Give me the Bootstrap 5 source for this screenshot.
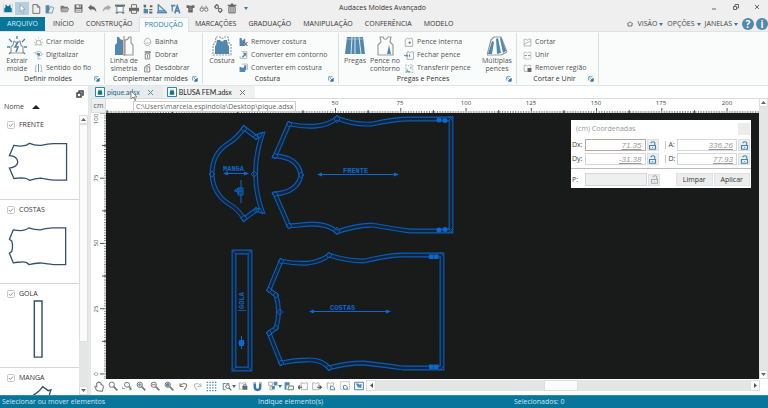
<!DOCTYPE html>
<html lang="pt-BR" class="h-100">
<head>
<meta charset="utf-8">
<meta name="viewport" content="width=device-width, initial-scale=1">
<title>Audaces Moldes Avançado</title>
<link href="https://cdn.jsdelivr.net/npm/bootstrap@5.3.0/dist/css/bootstrap.min.css" rel="stylesheet">
<style>
:root{--teal:#08759b;--ink:#444;--steel:#5088ae;--pen:#0b68d0;--dark:#181b1a}
body{font-family:"Open Sans","Noto Sans",sans-serif;font-size:7px;line-height:8px;color:var(--ink);background:#fff}
svg{display:block;flex:none}
button,input{font:inherit;color:inherit}
.plain{background:none;border:0;padding:0;color:inherit;display:flex;align-items:center;justify-content:center}
.ln{fill:none;stroke:#666;stroke-width:1.4;stroke-linejoin:round}
.lt{fill:none;stroke:#999;stroke-width:1.2;stroke-linejoin:round}
.bl{fill:none;stroke:var(--steel);stroke-width:1.6;stroke-linejoin:round}
.fb{fill:var(--steel)}.fk{fill:#666}
.topbar{background:#efefef;height:17px}
.side-part{flex:1 0 0}
.quick{padding-left:1px;padding-top:2px}
.quick button{width:14px;height:13px}
.quick .chosen{background:#b5cfdf}
.app-title{color:#333}
.tabsrow{background:#efefef;height:15px;border-bottom:1px solid #dfe3e4}
.tabsrow a{padding:0 6px;height:14px;display:flex;align-items:center;color:#333;text-decoration:none}
.tabsrow a.file{background:var(--teal);color:#dceef5;width:45px;padding:0;margin-right:2px;justify-content:center}
.tabsrow a.on{background:#fafcfc;color:#277fa5;border:1px solid #dce1e3;border-bottom:0;height:15px;padding:0 5px}
.menus{gap:4px}
.menus button,.rounds{gap:2px}
.tri{width:0;height:0;border:2px solid transparent;border-top:3px solid #39799b;border-bottom:0}
.ribbon{background:#fafcfc;height:54px;border-bottom:1px solid #e2e5e5}
.rgroup{border-right:1px solid #dcdfdf;margin:1px 0;padding-left:4px}
.big{width:30px;padding-top:2px;flex-direction:column;justify-content:flex-start;color:#555;white-space:nowrap}
.small-col{padding:2px 0 0 2px}
.small-col button{height:13px;gap:3px;justify-content:flex-start;color:#555;white-space:nowrap}
.gname{height:11px;color:#333}
.w1{width:105px;padding-left:2px}.w2{width:98px}.w3{width:136px}.w4{width:178px;padding-left:1px}.w5{width:82px}
.side{width:88px}
.side-head{height:29px}
.piece{height:84px;padding:6px 4px 0 3px}
.piece+.piece{border-top:1px solid #d5d8d8}
.piece label{color:#333}
.piece input{width:8px;height:8px;border-radius:0;margin:0;border:1px solid #ccc;background-color:#fff}
.piece .form-check-input:checked{background-color:#fff;border-color:#c8c8c8;background-image:none}
.tickbox{width:8px;height:8px;display:grid}
.tickbox>*{grid-area:1/1}
.tickbox svg{pointer-events:none;z-index:1}
.thumbline{fill:none;stroke:#34516d;stroke-width:4}
.thumbline.thin{stroke-width:3}
.sb{background:#e4e6e5}
.sb button{background:#fcfcfc;border:1px solid #dedede;width:9px;height:9px}
.sb .grip{background:#fbfbfb;border:1px solid #dedede}
.split{width:3px;background:#e6e8e8}
.doctabs{height:12px;font-family:Lato,sans-serif}
.doctab{background:#f0f2f2;padding:0 4px;gap:2px;color:#222}
.doctab.sel{background:#e7ebed;color:#27638a}
.doctab a{color:inherit;text-decoration:none}
.doctab .shut{padding:0 6px}
.corner{width:15px;background:#eef0f0;border:1px solid #dcdfdf;color:#555}
.hrule{height:15px;border-top:1px solid #d8dbdb;background:#fff}
.vrule{width:15px;background:#fff}
.rt{font-size:6px;fill:#444}
.board{background:var(--dark)}
.pat .a{fill:none;stroke:#0c5cb8;stroke-width:4.8}
.pat .b{fill:none;stroke:#11253a;stroke-width:2.6}
.pat .n{fill:none;stroke:#0c5cb8;stroke-width:.9}
.pat .s{fill:var(--pen);stroke:none}
.pat .l{fill:none;stroke:var(--pen);stroke-width:1}
.pat text{font:bold 7px "Liberation Mono",monospace;fill:var(--pen)}
.coords{top:7px;right:8px;width:180px;background:#fff}
.coords .head{height:18px;padding:0 1px 0 5px;color:#999}
.coords .head button{width:12px;height:12px;background:#ececec}
.cgrid{display:grid;grid-template-columns:12px minmax(0,1fr) 12px 16px minmax(0,1fr) 12px;gap:2px 1px;padding:1px 1px 3px}
.cgrid input,.prow input{width:100%;min-width:0;height:12px;border:1px solid #d4d8da;border-radius:0;padding:0 3px;text-align:right;font:italic 8px "Liberation Sans",sans-serif;text-decoration:underline;color:#999;background:#fff}
.cgrid #dx{border-color:#b8a99c}
.lock{height:12px;background:#eceeef;border:1px solid #dde0e0}
.mid{border-left:1px solid #ccc;margin-left:5px;padding-left:3px}
.prow{display:grid;grid-template-columns:12px 62px 12px 14px 1fr 1fr;gap:1px;border-top:1px solid #bbb;padding:4px 1px 2px}
.prow input{background:#efefef;height:13px}
.prow .cmd{background:#ededed;border:1px solid #e2e2e2;height:13px;color:#333}
.prow .first{grid-column:5}
.tip{top:3px;left:42px;background:#fff;border:1px solid #ccc;height:11px;padding:0 2px;white-space:nowrap;color:#666;z-index:3;display:flex;align-items:center}
.pointer{left:39px;top:4px;z-index:4}
.viewbar{height:16px;padding-left:1px}
.viewbar .tools button{width:14px;height:14px}
.viewbar .sb{height:11px;margin-top:1px}
.viewbar .sb button{width:10px;height:11px}
.status{background:var(--teal);color:#cfe6ef;height:13px;border-top:1px solid #3189a9}
.status>div{padding-left:2px}
.rnd{width:12px;height:12px;border-radius:50%;background:var(--steel);color:#fff;font-weight:700;font-size:10px}
</style>
<script src="https://cdn.jsdelivr.net/npm/bootstrap@5.3.0/dist/js/bootstrap.bundle.min.js"></script>
</head>
<body class="d-flex flex-column min-vh-100 overflow-hidden">
<svg width="0" height="0" class="position-absolute" aria-hidden="true">
<defs>
<path id="p-frente" d="M289 124Q304 127 316 126Q329 125 337 118Q353 125 372 124Q395 119 410 119H451V231H410Q395 229 372 225Q353 226 337 232Q329 224 311 224L289 226L275 194Q298 192 301 175Q298 157 275 156Z"/>
<path id="p-costas" d="M281 261Q296 264 309 263Q322 261 329 255Q346 261 364 261Q390 255 403 255H442V368H403Q390 366 364 363Q346 363 329 368Q322 359 306 360Q294 360 281 363L269 333L276 328Q281 312 276 295L269 290Z"/>
<path id="p-gola" d="M234 252H250V369H234Z"/>
<path id="p-manga" d="M244 128Q237 138 229 143Q212 153 212 174Q213 194 229 204Q238 209 244 219L256 210L262 211Q249 174 262 135L256 137Z"/>
<symbol id="shirt" viewBox="0 0 16 16"><path d="M4 1h2v2q2 2 4 0V1h2v4l2 2v8H2V7l2-2z"/></symbol>
<symbol id="i-logo" viewBox="0 0 16 16"><path d="M1 0v16M15 0v16" stroke="#b7ccd6"/><path fill="#08759b" d="M4 2h2v2h4V2h2v4l2 2v6H2V8l2-2z"/></symbol>
<symbol id="i-arrow" viewBox="0 0 16 16"><path d="M5 1l8 8H9l2 5-2 1-2-5-2 2z" fill="#fff" stroke="#6f93aa"/></symbol>
<symbol id="i-page" viewBox="0 0 16 16"><path class="ln" fill="#fff" d="M3 1h7l4 4v10H3zM10 1v4h4"/></symbol>
<symbol id="i-books" viewBox="0 0 16 16"><path class="fb" d="M1 2h6v13H1z"/><path d="M9 4l5 2-3 9-6-2z" fill="#eee" stroke="#6b8da5" stroke-width="1.3"/></symbol>
<symbol id="i-open" viewBox="0 0 16 16"><path d="M1 13V3h5l2 2h6v2H5z" fill="#777"/><path d="M5 8h11l-3 6H2z" fill="#b5ae9d" stroke="#777"/></symbol>
<symbol id="i-save" viewBox="0 0 16 16"><path class="fk" d="M1 1h14v14H1zM4 2v4h8V2zM3 9v5h10V9z" fill-rule="evenodd"/><path class="fk" d="M4 10h8v1H4zM4 12h8v1H4zM9 2h2v3H9z"/></symbol>
<symbol id="i-undo" viewBox="0 0 16 16"><path d="M0 6l6-5v3q8 0 9 10-3-5-9-5v3z" fill="#666"/></symbol>
<symbol id="i-redo" viewBox="0 0 16 16"><path d="M16 6l-6-5v3q-8 0-9 10 3-5 9-5v3z" fill="#aaa"/></symbol>
<symbol id="i-plot" viewBox="0 0 16 16"><path class="fk" d="M0 1h16v3H0z"/><path d="M3 4h10v9H3z" fill="#fff" stroke="#6387a0" stroke-width="1.6"/><path class="fk" d="M1 13h4v2H1zM11 13h4v2h-4z"/></symbol>
<symbol id="i-print" viewBox="0 0 16 16"><path class="ln" d="M4 6V1h8v5M4 10h8v5H4z"/><path class="fk" d="M0 6h16v6h-3v-2H3v2H0z"/></symbol>
<symbol id="i-points" viewBox="0 0 16 16"><path class="fb" d="M1 8h7v7H1z"/><path class="fk" d="M1 1h4v4H1zM11 2h4v3h-4zM10 8h5v2h-5zM10 12h5v3h-5z"/><path d="M3 5v3" stroke="#666"/></symbol>
<symbol id="i-set" viewBox="0 0 16 16"><path d="M2 1l11 10H2z" fill="#dce7ee" stroke="#4d86ac" stroke-width="2"/><path class="fb" d="M0 12h16v3H0z"/></symbol>
<symbol id="i-textA" viewBox="0 0 16 16"><path class="fb" d="M0 1h7v3H0zM1 4h2v8H1z"/><path d="M6 15L10 3l4 12M7 11h6" fill="none" stroke="#5088ae" stroke-width="2.600"/></symbol>
<symbol id="i-tee" viewBox="0 0 16 16"><path class="fk" d="M1 2h4q3 2 6 0h4v5h-3v8H4V7H1z"/><path d="M6 7h4M6 10h4" stroke="#bbb"/></symbol>
<symbol id="i-bino" viewBox="0 0 16 16"><g class="ln" stroke-width="2"><circle cx="4" cy="10" r="3"/><circle cx="12" cy="10" r="3"/><path d="M2 8l3-5M14 8l-3-5M6 7h4"/></g></symbol>
<symbol id="i-gears" viewBox="0 0 16 16"><g fill="none" stroke="#666" stroke-width="2"><circle cx="5" cy="5" r="3"/><circle cx="11" cy="11" r="3"/></g><path d="M5 0v2M0 5h2M8 8l1 1M15 11h1M11 14v2" stroke="#666" stroke-width="2"/></symbol>
<symbol id="i-trash" viewBox="0 0 16 16"><path class="fk" d="M1 2h5V0h4v2h5v2H1z"/><path d="M3 5h10v10H3z" fill="#ddd" stroke="#666" stroke-width="1.6"/><path d="M6 6v8M8 6v8M10 6v8" stroke="#666"/></symbol>
<symbol id="i-extract" viewBox="0 0 20 20"><path d="M10 0v3M2 3l3 3M18 3l-3 3M0 11h3M17 11h3M2 18l2-2M18 18l-2-2" stroke="#4d86ac" stroke-width="1.3"/><path class="lt" d="M7 5q3 3 6 0l1 4 2 2v6H4v-6l2-2z"/><path d="M11 6l-3 5h3l-2 5" fill="none" stroke="#4d86ac" stroke-width="1.600"/></symbol>
<symbol id="i-line" viewBox="0 0 20 20"><path class="fb" d="M3 1h2q1 3 4 3v15H1V9l2-2z"/><path class="lt" d="M11 4q3 0 4-3h2v6l2 2v10h-8z"/><path d="M10 0v20" stroke="#b86b4a"/></symbol>
<symbol id="i-costura" viewBox="0 0 20 20"><path class="lt" stroke-dasharray="2 1" d="M4 1h4q2 3 4 0h4l1 6 2 2v10H1V9l2-2z"/><path class="fb" d="M5 4h3q2 3 4 0h3l1 5 1 1v8H3v-8l1-1z"/></symbol>
<symbol id="i-pregas" viewBox="0 0 20 20"><path class="fb" d="M2 1h16l2 17H0z"/><path d="M7 1L6 18M10 1v17M14 1l2 17" stroke="#fff" stroke-width=".8"/><path d="M2 3h16" stroke="#cfdee8" stroke-width=".6"/></symbol>
<symbol id="i-pence" viewBox="0 0 20 20"><path class="lt" d="M5 1h3q2 5 5 0h3l-1 5 3 3v10H3V9l3-3z"/><path class="fb" d="M14 9l2 9h-4z"/></symbol>
<symbol id="i-multi" viewBox="0 0 20 20"><path class="lt" d="M7 1h7l6 15-6 3H0L4 4z"/><path class="fb" d="M5 5L1 18h4l2-12zM9 3l1 15 4-1L11 2zM14 1l5 14-3 2-3-14z"/></symbol>
<symbol id="s-star" viewBox="0 0 16 16"><path d="M8 0v3M1 2l3 3M15 2l-3 3M0 9h3M13 9h3M1 15l3-3M15 15l-3-3" stroke="#aaa"/><path class="lt" d="M5 5q3 2 6 0l2 8H3z"/></symbol>
<symbol id="s-digit" viewBox="0 0 16 16"><path class="lt" d="M1 4l9-3 5 6-5 3zM7 9v6h5"/><path class="fb" d="M5 4l6 1-1 5-4-2z"/></symbol>
<symbol id="s-fio" viewBox="0 0 16 16"><path class="lt" d="M5 2Q2 4 3 8l-1 6h3M11 2q3 2 2 6l1 6h-3"/><path d="M8 1v14" stroke="#4d86ac" stroke-width="1.5"/></symbol>
<symbol id="s-hem" viewBox="0 0 16 16"><path class="lt" d="M5 2q6-2 8 2l1 6-4 4H5L2 9zM4 10h7l3-3"/></symbol>
<symbol id="s-fold" viewBox="0 0 16 16"><path class="ln" d="M3 4h10M4 6h8v9H4zM3 2h10v2"/><path class="bl" d="M8 8v5"/></symbol>
<symbol id="s-unfold" viewBox="0 0 16 16"><path class="ln" d="M3 6h9v9H3zM5 4l7-3"/><path class="bl" d="M7 8v5M10 1l3 3"/></symbol>
<symbol id="s-rem" viewBox="0 0 16 16"><path class="fb" d="M1 1h4v4q3 1 4-3h2v8h-1v5H1z"/><path d="M9 8l6 7M15 8l-6 7" stroke="#777" stroke-width="2"/></symbol>
<symbol id="s-cont" viewBox="0 0 16 16"><path class="lt" d="M5 2h9v12H2v-4"/><path class="fb" d="M7 4h6v7l-2-2-4 4-2-2 4-4z"/></symbol>
<symbol id="s-cost" viewBox="0 0 16 16"><path class="lt" d="M5 1h10v10"/><path class="fb" d="M1 6h3l2 2 3-2V3h4v9h-2v3H1z"/></symbol>
<symbol id="s-pin" viewBox="0 0 16 16"><path class="lt" d="M2 15V5l2-3h2q2 3 4 0h3l1 5v8z"/><path class="bl" d="M9 7v4M7 9h4"/></symbol>
<symbol id="s-pclose" viewBox="0 0 16 16"><path class="lt" d="M5 15V3h3q2 3 4 0h3v12z"/><path class="bl" d="M0 9h6M4 7l2 2-2 2M9 7v4"/></symbol>
<symbol id="s-ptrans" viewBox="0 0 16 16"><path class="lt" stroke-dasharray="3 2" d="M3 15V3h3q2 3 4 0h4v12z"/><path class="bl" d="M5 10v4h5M11 6v3"/></symbol>
<symbol id="s-cut" viewBox="0 0 16 16"><path class="lt" d="M2 15V3h3q3 3 5 0h4v12zM2 12L14 6"/></symbol>
<symbol id="s-join" viewBox="0 0 16 16"><path class="lt" stroke-dasharray="3 1" d="M2 15V3h3q3 3 5 0h4v12z"/><path class="bl" d="M3 9h4M9 9h4"/></symbol>
<symbol id="s-region" viewBox="0 0 16 16"><path class="lt" d="M2 14V3h3q3 3 5 0h3v4M2 14h6"/><path class="fk" d="M8 8h7v7H8z"/></symbol>
<symbol id="i-launch" viewBox="0 0 8 8"><path d="M1 6V1h5" fill="none" stroke="#5f94b3" stroke-width="1.3"/><path d="M3 3l3 3M7 3v4H3z" fill="#2f7198" stroke="#2f7198"/></symbol>
<symbol id="v-hand" viewBox="0 0 16 16"><path class="ln" d="M4 14L1 8q1-2 3 1V3q1-1 2 0V1.500q1-1 2 0V3q1-2 2 0v2q2-1 2 1v1q2-1 2 1l-2 7z"/></symbol>
<symbol id="v-zoom" viewBox="0 0 16 16"><circle class="ln" cx="6" cy="6" r="4.200"/><path d="M9 9l6 6" stroke="#777" stroke-width="2.500"/></symbol>
<symbol id="v-zbox" viewBox="0 0 16 16"><path d="M5 12H1V9M14 8v6h-3" fill="none" stroke="#8a6a50"/><circle class="bl" cx="8" cy="6" r="4"/><path d="M11 9l4 5" stroke="#777" stroke-width="2"/></symbol>
<symbol id="v-plus" viewBox="0 0 16 16"><use href="#v-zoom"/><path d="M3 6h6M6 3v6" stroke="#4d86ac" stroke-width="1.500"/></symbol>
<symbol id="v-minus" viewBox="0 0 16 16"><use href="#v-zoom"/><path d="M3 6h6" stroke="#a55" stroke-width="1.500"/></symbol>
<symbol id="v-all" viewBox="0 0 16 16"><use href="#v-zoom"/><circle class="fb" cx="6" cy="6" r="3"/></symbol>
<symbol id="v-back" viewBox="0 0 16 16"><path d="M2 2v6h6M2 7q5-7 11-3 2 4-4 10" fill="none" stroke="#8a7365" stroke-width="1.800"/></symbol>
<symbol id="v-fwd" viewBox="0 0 16 16"><path d="M14 2v6H8M14 7Q9 0 3 4q-2 4 4 10" fill="none" stroke="#bbb" stroke-width="1.800"/></symbol>
<symbol id="v-grid" viewBox="0 0 16 16"><path d="M1 2h14M1 6h14M1 10h14M1 14h14" stroke="#4385b5" stroke-width="2" stroke-dasharray="2 2"/></symbol>
<symbol id="v-find" viewBox="0 0 16 16"><path class="bl" d="M2 14V4h3q2 2 3 0h3v2M2 14h4"/><circle class="ln" cx="9" cy="9" r="3"/><path d="M11 11l4 4" stroke="#666" stroke-width="2"/></symbol>
<symbol id="v-lockp" viewBox="0 0 16 16"><path class="lt" d="M2 13V3h3q2 2 4 0h3v4M2 13h4"/><path class="fk" d="M7 8h8v6H7z"/><path class="bl" d="M9 8V6h4v2"/></symbol>
<symbol id="v-magnet" viewBox="0 0 16 16"><path d="M4 2v6q0 5 4 5t4-5V2" fill="none" stroke="#3476a8" stroke-width="3.500"/><path d="M2 3h4M10 3h4" stroke="#bbb" stroke-width="2"/></symbol>
<symbol id="v-blocks" viewBox="0 0 16 16"><path class="lt" d="M1 2h6v5H1zM3 9h6v5H3z"/><path class="fb" d="M9 1h6v6H9zM6 8h5v5H6z"/></symbol>
<symbol id="v-mov" viewBox="0 0 16 16"><path class="fb" d="M1 2h8v5H4v7H1z"/><path class="ln" d="M8 8h7v6H6z"/></symbol>
<symbol id="v-left" viewBox="0 0 16 16"><path class="lt" d="M5 14V3h3q2 3 4 0h3v11z"/><path d="M0 10h7M3 7l-3 3 3 3" fill="none" stroke="#555" stroke-width="1.800"/></symbol>
<symbol id="v-right" viewBox="0 0 16 16"><path class="lt" d="M1 14V3h3q2 3 4 0h3v11z"/><path d="M8 10h7M12 7l3 3-3 3" fill="none" stroke="#555" stroke-width="1.800"/></symbol>
<symbol id="v-down" viewBox="0 0 16 16"><path class="lt" d="M2 13V3h3q2 3 4 0h3v4"/><path class="bl" d="M7 8q6-1 7 6H7z"/></symbol>
<symbol id="v-dash" viewBox="0 0 16 16"><path class="lt" stroke-dasharray="2 1" d="M1 1h14v13H1z"/><path class="bl" d="M5 8q6-4 7 5H6z"/></symbol>
<symbol id="v-img" viewBox="0 0 16 16"><path class="bl" d="M1 2h14v12H1z"/><path class="fb" d="M3 4h4l2 2 3-2v7l-6-1z"/></symbol>
<symbol id="i-lock" viewBox="0 0 12 12"><path d="M2 6h8v5H2z" fill="none" stroke="currentColor" stroke-width="1.500"/><path d="M4 3V2q3-2 5 0v4M6 8v1" fill="none" stroke="currentColor" stroke-width="1.400"/></symbol>
<pattern id="hticks" width="65.250" height="15" x="33.300" patternUnits="userSpaceOnUse"><path d="M.5 9v5M33.100 11v3" stroke="#555"/><path d="M0 13h66" stroke="#777" stroke-width="2" stroke-dasharray="1 1.610"/></pattern>
<pattern id="vticks" height="65.250" width="15" y="64.700" patternUnits="userSpaceOnUse"><path d="M9 .5h6M11 33.100h4" stroke="#555"/><path d="M14 0v66" stroke="#777" stroke-width="2" stroke-dasharray="1 1.610"/></pattern>
</defs>
</svg>

<header>
<div class="topbar d-flex align-items-start">
<div class="quick side-part d-flex">
<button class="plain" aria-label="Audaces"><svg width="10" height="11"><use href="#i-logo"/></svg></button>
<button class="plain chosen" aria-label="Selecionar"><svg width="10" height="10"><use href="#i-arrow"/></svg></button>
<button class="plain" aria-label="Novo"><svg width="10" height="10"><use href="#i-page"/></svg></button>
<button class="plain" aria-label="Biblioteca"><svg width="10" height="10"><use href="#i-books"/></svg></button>
<button class="plain" aria-label="Abrir"><svg width="9" height="9"><use href="#i-open"/></svg></button>
<button class="plain" aria-label="Salvar"><svg width="9" height="9"><use href="#i-save"/></svg></button>
<button class="plain" aria-label="Desfazer"><svg width="9" height="9"><use href="#i-undo"/></svg></button>
<button class="plain" aria-label="Refazer"><svg width="9" height="9"><use href="#i-redo"/></svg></button>
<button class="plain" aria-label="Plotar"><svg width="10" height="10"><use href="#i-plot"/></svg></button>
<button class="plain" aria-label="Imprimir"><svg width="10" height="10"><use href="#i-print"/></svg></button>
<button class="plain" aria-label="Pontos"><svg width="10" height="10"><use href="#i-points"/></svg></button>
<button class="plain" aria-label="Medidas"><svg width="10" height="10"><use href="#i-set"/></svg></button>
<button class="plain" aria-label="Texto"><svg width="10" height="10"><use href="#i-textA"/></svg></button>
<button class="plain" aria-label="Modelo"><svg width="9" height="9"><use href="#i-tee"/></svg></button>
<button class="plain" aria-label="Localizar"><svg width="10" height="9"><use href="#i-bino"/></svg></button>
<button class="plain" aria-label="Preferências"><svg width="9" height="9"><use href="#i-gears"/></svg></button>
<button class="plain" aria-label="Excluir"><svg width="10" height="11"><use href="#i-trash"/></svg></button>
<button class="plain" aria-label="Mais comandos"><span class="tri"></span></button>
</div>
<div class="app-title pt-1">Audaces Moldes Avançado</div>
<div class="side-part d-flex justify-content-end pe-1 pt-1 gap-2">
<button class="plain px-1" aria-label="Minimizar"><svg width="5" height="6"><path d="M0 5h4" stroke="#666"/></svg></button>
<button class="plain px-1" aria-label="Restaurar"><svg width="6" height="6" fill="none" stroke="#666"><path d="M.5 2.500h3v3h-3zM2 2V.5h3.500V4H4"/></svg></button>
<button class="plain px-1" aria-label="Fechar"><svg width="5" height="6" stroke="#666"><path d="M0 1l4 4M4 1L0 5"/></svg></button>
</div>
</div>
<nav class="tabsrow d-flex" aria-label="Guias">
<a href="#" class="file">ARQUIVO</a><a href="#">INÍCIO</a><a href="#">CONSTRUÇÃO</a><a href="#" class="on">PRODUÇÃO</a><a href="#">MARCAÇÕES</a><a href="#">GRADUAÇÃO</a><a href="#">MANIPULAÇÃO</a><a href="#">CONFERÊNCIA</a><a href="#">MODELO</a>
<div class="ms-auto d-flex align-items-center menus">
<svg width="8" height="8"><path d="M1 4l3-2 3 2M2 4v2h4V4" fill="none" stroke="#777"/></svg>
<button class="plain">VISÃO<span class="tri"></span></button>
<button class="plain">OPÇÕES<span class="tri"></span></button>
<button class="plain">JANELAS<span class="tri"></span></button>
<div class="d-flex rounds"><button class="plain rnd" aria-label="Ajuda">?</button>
<button class="plain rnd" aria-label="Informações">i</button></div>
</div>
</nav>
<div class="ribbon d-flex">
<section class="rgroup w1 d-flex flex-column">
<div class="d-flex flex-grow-1">
<button class="plain big"><svg width="20" height="22"><use href="#i-extract"/></svg><span>Extrair<br>molde</span></button>
<div class="small-col"><button class="plain"><svg width="9" height="10"><use href="#s-star"/></svg>Criar molde</button><button class="plain"><svg width="9" height="10"><use href="#s-digit"/></svg>Digitalizar</button><button class="plain"><svg width="9" height="10"><use href="#s-fio"/></svg>Sentido do fio</button></div>
</div>
<div class="gname d-flex align-items-center"><span class="flex-grow-1 text-center">Definir moldes</span><button class="plain me-1" aria-label="Opções de Definir moldes"><svg width="6" height="6"><use href="#i-launch"/></svg></button></div>
</section>
<section class="rgroup w2 d-flex flex-column">
<div class="d-flex flex-grow-1">
<button class="plain big"><svg width="20" height="22"><use href="#i-line"/></svg><span>Linha de<br>simetria</span></button>
<div class="small-col ps-1"><button class="plain"><svg width="9" height="10"><use href="#s-hem"/></svg>Bainha</button><button class="plain"><svg width="9" height="10"><use href="#s-fold"/></svg>Dobrar</button><button class="plain"><svg width="9" height="10"><use href="#s-unfold"/></svg>Desdobrar</button></div>
</div>
<div class="gname d-flex align-items-center"><span class="flex-grow-1 text-center">Complementar moldes</span><button class="plain me-1" aria-label="Opções de Complementar moldes"><svg width="6" height="6"><use href="#i-launch"/></svg></button></div>
</section>
<section class="rgroup w3 d-flex flex-column">
<div class="d-flex flex-grow-1">
<button class="plain big"><svg width="20" height="22"><use href="#i-costura"/></svg><span>Costura</span></button>
<div class="small-col"><button class="plain"><svg width="9" height="10"><use href="#s-rem"/></svg>Remover costura</button><button class="plain"><svg width="9" height="10"><use href="#s-cont"/></svg>Converter em contorno</button><button class="plain"><svg width="9" height="10"><use href="#s-cost"/></svg>Converter em costura</button></div>
</div>
<div class="gname d-flex align-items-center"><span class="flex-grow-1 text-center">Costura</span><button class="plain me-1" aria-label="Opções de Costura"><svg width="6" height="6"><use href="#i-launch"/></svg></button></div>
</section>
<section class="rgroup w4 d-flex flex-column">
<div class="d-flex flex-grow-1">
<button class="plain big"><svg width="20" height="22"><use href="#i-pregas"/></svg><span>Pregas</span></button>
<button class="plain big"><svg width="20" height="22"><use href="#i-pence"/></svg><span>Pence no<br>contorno</span></button>
<div class="small-col ps-1"><button class="plain"><svg width="10" height="10"><use href="#s-pin"/></svg>Pence interna</button><button class="plain"><svg width="10" height="10"><use href="#s-pclose"/></svg>Fechar pence</button><button class="plain"><svg width="10" height="10"><use href="#s-ptrans"/></svg>Transferir pence</button></div>
<button class="plain big ms-auto me-1"><svg width="20" height="22"><use href="#i-multi"/></svg><span>Múltiplas<br>pences</span></button>
</div>
<div class="gname d-flex align-items-center"><span class="flex-grow-1 text-center">Pregas e Pences</span><button class="plain me-1" aria-label="Opções de Pregas e Pences"><svg width="6" height="6"><use href="#i-launch"/></svg></button></div>
</section>
<section class="rgroup w5 d-flex flex-column">
<div class="d-flex flex-grow-1">
<div class="small-col"><button class="plain"><svg width="9" height="10"><use href="#s-cut"/></svg>Cortar</button><button class="plain"><svg width="9" height="10"><use href="#s-join"/></svg>Unir</button><button class="plain"><svg width="9" height="10"><use href="#s-region"/></svg>Remover região</button></div>
</div>
<div class="gname d-flex align-items-center"><span class="flex-grow-1 text-center">Cortar e Unir</span><button class="plain me-1" aria-label="Opções de Cortar e Unir"><svg width="6" height="6"><use href="#i-launch"/></svg></button></div>
</section>
</div>
</header>

<div class="d-flex flex-grow-1">
<aside class="side d-flex flex-column">
<div class="side-head d-flex flex-column justify-content-between">
<button class="plain align-self-end p-1 pb-0" aria-label="Desencaixar"><svg width="8" height="8" fill="none" stroke="#444" stroke-width="1.500"><path d="M3 3V1h4v4H6M1 3h4v4H1z"/></svg></button>
<div class="d-flex align-items-center gap-2 ps-1 pb-1">Nome<svg width="8" height="4"><path d="M4 0l4 4H0z" fill="#222"/></svg></div>
</div>
<div class="d-flex flex-grow-1">
<div class="flex-grow-1 d-flex flex-column position-relative overflow-hidden"><div class="position-absolute top-0 start-0 end-0">
<div class="piece"><div class="d-flex align-items-center gap-1 ps-1"><span class="tickbox"><input class="form-check-input" type="checkbox" id="c1" checked><svg width="8" height="8"><path d="M2 4l1.500 1.500L6 2.500" fill="none" stroke="#999"/></svg></span><label for="c1">FRENTE</label></div>
<svg width="70" height="60"><g transform="translate(-83 -24) scale(.325 .325)"><use href="#p-frente" class="thumbline"/></g></svg></div>
<div class="piece"><div class="d-flex align-items-center gap-1 ps-1"><span class="tickbox"><input class="form-check-input" type="checkbox" id="c2" checked><svg width="8" height="8"><path d="M2 4l1.500 1.500L6 2.500" fill="none" stroke="#999"/></svg></span><label for="c2">COSTAS</label></div>
<svg width="70" height="60"><g transform="translate(-81 -69) scale(.325 .325)"><use href="#p-costas" class="thumbline"/></g></svg></div>
<div class="piece"><div class="d-flex align-items-center gap-1 ps-1"><span class="tickbox"><input class="form-check-input" type="checkbox" id="c3" checked><svg width="8" height="8"><path d="M2 4l1.500 1.500L6 2.500" fill="none" stroke="#999"/></svg></span><label for="c3">GOLA</label></div>
<svg width="70" height="64"><g transform="translate(-81 -118) scale(.48 .48)"><use href="#p-gola" class="thumbline thin"/></g></svg></div>
<div class="piece"><div class="d-flex align-items-center gap-1 ps-1"><span class="tickbox"><input class="form-check-input" type="checkbox" id="c4" checked><svg width="8" height="8"><path d="M2 4l1.500 1.500L6 2.500" fill="none" stroke="#999"/></svg></span><label for="c4">MANGA</label></div>
<svg width="70" height="60"><g transform="translate(-70 -53) scale(.45 .45)"><use href="#p-manga" class="thumbline thin"/></g></svg></div>
</div></div>
<div class="sb d-flex flex-column"><button class="plain" aria-label="Subir lista"><svg width="5" height="3"><path d="M2.500 0L5 3H0z" fill="#666"/></svg></button><div class="grip" style="height:78%"></div><button class="plain mt-auto" aria-label="Descer lista"><svg width="5" height="3"><path d="M2.500 3L5 0H0z" fill="#666"/></svg></button></div>
</div>
</aside>
<div class="split"></div>
<main class="d-flex flex-column flex-grow-1 position-relative">
<div class="doctabs d-flex">
<div class="doctab sel d-flex align-items-center"><svg width="10" height="10"><path d="M.5.5h9v9h-9z" fill="#fff" stroke="#2a86ad"/><use href="#shirt" x="2" y="2" width="6" height="6" fill="#08759b"/></svg><a href="#">pique.adsx</a><button class="plain shut" aria-label="Fechar pique.adsx"><svg width="5" height="5" stroke="#4e8bac"><path d="M0 0l5 5M5 0L0 5"/></svg></button></div>
<div class="doctab d-flex align-items-center"><svg width="10" height="10"><path d="M.5.5h9v9h-9z" fill="#fff" stroke="#2a86ad"/><use href="#shirt" x="2" y="2" width="6" height="6" fill="#08759b"/></svg><a href="#">BLUSA FEM.adsx</a><button class="plain shut" aria-label="Fechar BLUSA FEM.adsx"><svg width="5" height="5" stroke="#777"><path d="M0 0l5 5M5 0L0 5"/></svg></button></div>
</div>
<div class="d-flex flex-grow-1">
<div class="d-flex flex-column flex-grow-1">
<div class="d-flex position-relative">
<div class="corner d-flex align-items-center justify-content-center">cm</div>
<svg class="hrule flex-grow-1" width="10" height="15"><rect width="100%" height="15" fill="url(#hticks)"/><g class="rt" text-anchor="middle"><text x="229" y="6">50</text><text x="294" y="6">75</text><text x="360" y="6">100</text><text x="425" y="6">125</text><text x="490" y="6">150</text><text x="555" y="6">175</text><text x="621" y="6">200</text></g></svg>
<div class="tip position-absolute">C:\Users\marcela.espindola\Desktop\pique.adsx</div>
</div>
<div class="d-flex flex-grow-1">
<svg class="vrule" height="266"><rect width="15" height="100%" fill="url(#vticks)"/><g class="rt" text-anchor="middle"><text transform="translate(7 6) rotate(-90)">100</text><text transform="translate(7 65) rotate(-90)">75</text><text transform="translate(7 130) rotate(-90)">50</text><text transform="translate(7 196) rotate(-90)">25</text><text transform="translate(7 261) rotate(-90)">0</text></g></svg>
<div class="board flex-grow-1 position-relative">
<svg class="pat" width="100%" height="266"><g transform="translate(-106 -113)">
<use href="#p-manga" class="a"/><use href="#p-manga" class="b"/><use href="#p-frente" class="a"/><use href="#p-frente" class="b"/><use href="#p-costas" class="a"/><use href="#p-costas" class="b"/><use href="#p-gola" class="a"/><use href="#p-gola" class="b"/>
<path class="n" d="M244 125l3 4-3 3-3-3zM212 171l3 3-3 3-3-3zM254 171l3 3-3 3-3-3zM244 215l3 3-3 4-3-4zM256 134l3 3-3 3-3-3zM256 207l3 3-3 3-3-3zM263 132l-8 3 5 3zM263 214l-8-4 5-2zM289 121l3 3-3 3-3-3zM275 153l3 3-3 3-3-3zM301 172l3 3-3 3-3-3zM275 191l3 3-3 3-3-3zM289 223l3 3-3 3-3-3zM337 115l3 4-3 4-3-4zM337 227l3 4-3 4-3-4zM448 116l5 5M453 116l-5 5M448 228l5 5M453 228l-5 5"/>
<path class="n" d="M281 258l3 3-3 3-3-3zM269 287l3 3-3 3-3-3zM276 292l3 3-3 3-3-3zM280 309l3 3-3 3-3-3zM276 325l3 3-3 3-3-3zM269 330l3 3-3 3-3-3zM281 360l3 3-3 3-3-3zM329 252l3 3-3 3-3-3zM329 365l3 3-3 3-3-3zM232 250l4 4M252 250l-4 4M232 371l4-4M252 371l-4-4M440 252l4 4M440 370l4-4"/>
<g class="s"><circle cx="439" cy="120" r="2.500"/><circle cx="445" cy="120.500" r="2.500"/><circle cx="439" cy="230" r="2.500"/><circle cx="445" cy="229.500" r="2.500"/><path d="M429 254.500h4.500v4.500h-4.500zM434 254.500h4.500v4.500h-4.500zM429 364.500h4.500v4.500h-4.500zM434 364.500h4.500v4.500h-4.500zM223 173.500l5-2v4zM249 173.500l-5-2v4zM317 174.500l5-2v4zM399 174.500l-5-2v4zM309 311.500l5-2v4zM391 311.500l-5-2v4zM239 340h5v6h-5z"/></g>
<path class="l" d="M225 173.500h22M318 174.500h80M310 311.500h80M241.500 336v13M238 343h7M241 180v23M234 191h9M238 188h5v7h-5zM235 190l4-2v6z"/>
<path class="n" d="M238 310.500h8"/>
<text x="223" y="171">MANGA</text><text x="343" y="173">FRENTE</text><text x="330" y="310">COSTAS</text><text transform="translate(244 309) rotate(-90)">GOLA</text>
</g></svg>
<form class="coords position-absolute">
<div class="head d-flex align-items-center justify-content-between">(cm) Coordenadas<button type="button" class="plain" aria-label="Fechar coordenadas"></button></div>
<div class="cgrid align-items-center">
<label for="dx">Dx:</label><input id="dx" value="71.35"><button type="button" class="plain lock" aria-label="Travar Dx"><svg width="9" height="9" color="#4385b5"><use href="#i-lock"/></svg></button><label class="mid" for="ca">A:</label><input id="ca" value="336.26"><button type="button" class="plain lock" aria-label="Travar A"><svg width="9" height="9" color="#4385b5"><use href="#i-lock"/></svg></button>
<label for="dy">Dy:</label><input id="dy" value="-31.38"><button type="button" class="plain lock" aria-label="Travar Dy"><svg width="9" height="9" color="#4385b5"><use href="#i-lock"/></svg></button><label class="mid" for="cd">D:</label><input id="cd" value="77.93"><button type="button" class="plain lock" aria-label="Travar D"><svg width="9" height="9" color="#4385b5"><use href="#i-lock"/></svg></button>
</div>
<div class="prow align-items-center"><label for="cp">P:</label><input id="cp" disabled><button type="button" class="plain lock" aria-label="Travar P" disabled><svg width="9" height="9" color="#aaa"><use href="#i-lock"/></svg></button><button type="button" class="plain cmd first">Limpar</button><button type="button" class="plain cmd">Aplicar</button></div>
</form>
</div>
</div>
</div>
<div class="sb d-flex flex-column justify-content-between"><button class="plain" aria-label="Rolar para cima"><svg width="5" height="3"><path d="M2.500 0L5 3H0z" fill="#666"/></svg></button><button class="plain" aria-label="Rolar para baixo"><svg width="5" height="3"><path d="M2.500 3L5 0H0z" fill="#666"/></svg></button></div>
</div>
<svg class="pointer position-absolute" width="8" height="11"><path d="M1 1l6 6H4l2 3-1 .5L3 7 1 9z" fill="#fff" stroke="#777" stroke-width=".8"/></svg>
<div class="viewbar d-flex">
<div class="tools d-flex">
<button class="plain" aria-label="Mover vista"><svg width="11" height="11"><use href="#v-hand"/></svg></button>
<button class="plain" aria-label="Zoom"><svg width="10" height="10"><use href="#v-zoom"/></svg></button>
<button class="plain" aria-label="Zoom em janela"><svg width="10" height="10"><use href="#v-zbox"/></svg></button>
<button class="plain" aria-label="Aumentar"><svg width="10" height="10"><use href="#v-plus"/></svg></button>
<button class="plain" aria-label="Diminuir"><svg width="10" height="10"><use href="#v-minus"/></svg></button>
<button class="plain" aria-label="Zoom total"><svg width="10" height="10"><use href="#v-all"/></svg></button>
<button class="plain" aria-label="Vista anterior"><svg width="9" height="9"><use href="#v-back"/></svg></button>
<button class="plain" aria-label="Próxima vista"><svg width="9" height="9"><use href="#v-fwd"/></svg></button>
<button class="plain" aria-label="Grade"><svg width="11" height="11"><use href="#v-grid"/></svg></button>
<button class="plain ms-1" aria-label="Exibir"><svg width="10" height="10"><use href="#v-find"/></svg><span class="tri"></span></button>
<button class="plain" aria-label="Bloquear"><svg width="10" height="10"><use href="#v-lockp"/></svg></button>
<button class="plain" aria-label="Ímã"><svg width="11" height="11"><use href="#v-magnet"/></svg></button>
<button class="plain ms-1" aria-label="Organizar"><svg width="10" height="10"><use href="#v-blocks"/></svg><span class="tri"></span></button>
<button class="plain" aria-label="Mover molde"><svg width="10" height="10"><use href="#v-mov"/></svg></button>
<button class="plain" aria-label="Molde anterior"><svg width="10" height="10"><use href="#v-left"/></svg></button>
<button class="plain" aria-label="Próximo molde"><svg width="10" height="10"><use href="#v-right"/></svg></button>
<button class="plain" aria-label="Girar molde"><svg width="10" height="10"><use href="#v-down"/></svg></button>
<button class="plain" aria-label="Girar tudo"><svg width="10" height="10"><use href="#v-dash"/></svg></button>
<button class="plain" aria-label="Imagem"><svg width="10" height="10"><use href="#v-img"/></svg></button>
</div>
<div class="sb d-flex flex-grow-1 me-2"><button class="plain" aria-label="Rolar para a esquerda"><svg width="3" height="5"><path d="M0 2.500L3 0v5z" fill="#555"/></svg></button><div class="flex-grow-1 d-flex"><div class="grip" style="margin-left:45%;width:9%"></div></div><button class="plain" aria-label="Rolar para a direita"><svg width="3" height="5"><path d="M3 2.500L0 0v5z" fill="#555"/></svg></button></div>
</div>
</main>
</div>
<footer class="status row g-0 align-items-center">
<div class="col-4">Selecionar ou mover elementos</div><div class="col-4">Indique elemento(s)</div><div class="col-4">Selecionados: 0</div>
</footer>
</body>
</html>
